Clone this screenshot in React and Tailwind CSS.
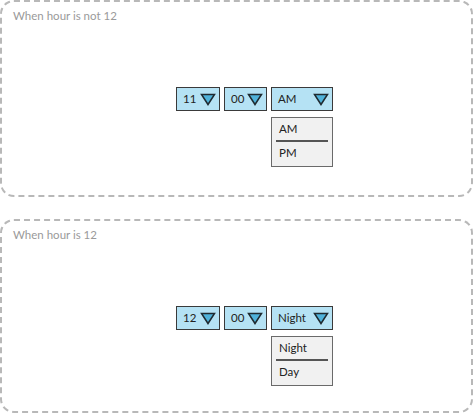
const Triangle = () => (
  <svg width="16" height="13" viewBox="0 0 16 13" className="shrink-0">
    <path d="M1.5 1.5 L14.5 1.5 L8 11.5 Z" fill="#4fb2da" stroke="#1f2a30" strokeWidth="1.5" strokeLinejoin="miter" />
  </svg>
);

const SelectBox = ({ value, width }) => (
  <div
    className={`flex items-center justify-between h-[24px] pl-[6px] pr-[3px] bg-[#b5e2f4] border border-[#3a3a3a] text-[11.5px] text-[#222] ${width}`}
  >
    <span>{value}</span>
    <Triangle />
  </div>
);

const Panel = ({ label, hour, first, second, height }) => (
  <div className={`relative w-[473px] ${height} rounded-[14px] border-2 border-dashed border-[#b8b8b8] bg-white`}>
    {/* Label */}
    <p className="absolute left-[11px] top-[5px] text-[11.5px] text-[#9a9a9a]">
      {label}
    </p>

    {/* Time pickers */}
    <div className="flex items-start gap-[4px] pl-[174px] pt-[85px]">
      <SelectBox value={hour} width="w-[44px]" />
      <SelectBox value="00" width="w-[43px]" />

      <div className="flex flex-col gap-[6px]">
        <SelectBox value={first} width="w-[62px]" />

        <div className="w-[62px] h-[50px] bg-[#f1f1f1] border border-[#6a6a6a] px-[4px] text-[11.5px] text-[#222]">
          <div className="h-[24px] flex items-center pl-[3px] border-b-2 border-[#555]">{first}</div>
          <div className="h-[22px] flex items-center pl-[3px]">{second}</div>
        </div>
      </div>
    </div>
  </div>
);

export default function App() {
  return (
    <div className="w-[474px] h-[415px] bg-white flex flex-col gap-[22px] font-['Lato',sans-serif] overflow-hidden">
      <Panel label="When hour is not 12" hour="11" first="AM" second="PM" height="h-[197px]" />
      <Panel label="When hour is 12" hour="12" first="Night" second="Day" height="h-[194px]" />
    </div>
  );
}
